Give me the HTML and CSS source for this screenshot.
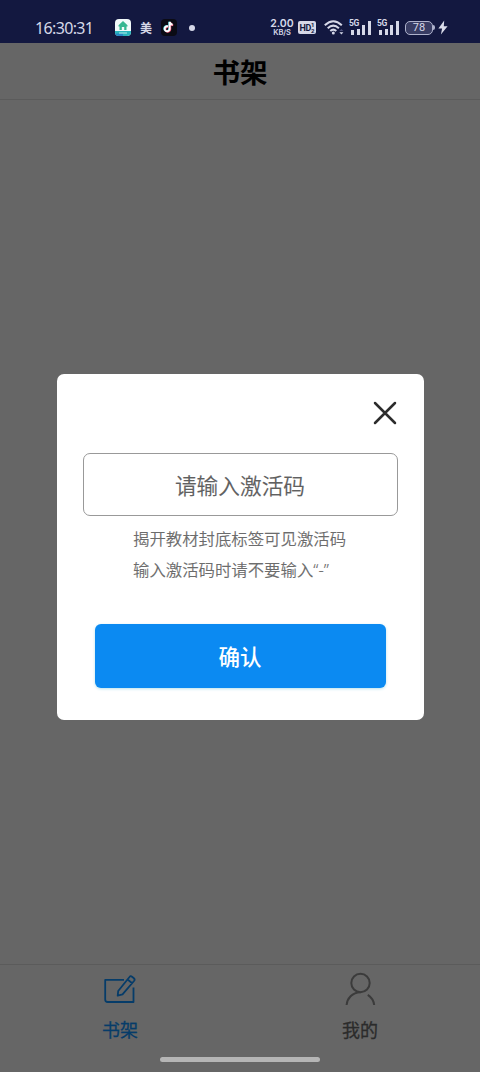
FILE: index.html
```html
<!DOCTYPE html>
<html lang="zh-CN">
<head>
<meta charset="utf-8">
<title>书架</title>
<link rel="stylesheet" href="styles.css">
</head>
<body>
<div class="screen">
  <div class="status">
    <span class="time">16:30:31</span>
    <svg class="app-icon" width="16" height="17" viewBox="0 0 16 17">
      <defs><clipPath id="app"><rect width="16" height="17" rx="4"/></clipPath></defs>
      <g clip-path="url(#app)"><rect width="16" height="17" fill="#f2fafa"/><path d="M0 12h16V17H0z" fill="#28b5bd"/><path d="M0 14.500h8V17H0z" fill="#2586c4"/><path d="M4 14h8" stroke="#b5edea" stroke-width="1"/></g>
      <path d="M8 2 3.500 6.200v1.200h1V11h2.300V8h2.400v3h2.300V7.400h1V6.200z" fill="#35b791"/>
    </svg>
    <span class="mei">美</span>
    <svg class="note-icon" width="16" height="17" viewBox="0 0 16 17">
      <rect width="16" height="17" rx="4" fill="#0b0b14"/>
      <g fill="none" stroke-width="1.900"><path d="M7 7.400a2.500 2.500 0 1 0 1.700 2.400V3c.3 1.700 1.300 2.500 2.900 2.700" stroke="#4bd5df" transform="translate(-.5 -.3)"/><path d="M7 7.400a2.500 2.500 0 1 0 1.700 2.400V3c.3 1.700 1.300 2.500 2.900 2.700" stroke="#e34466" transform="translate(.6 .5)"/><path d="M7 7.400a2.500 2.500 0 1 0 1.700 2.400V3c.3 1.700 1.300 2.500 2.900 2.700" stroke="#fff"/></g>
    </svg>
    <span class="dot"></span>
    <div class="speed"><span class="rate">2.00</span><span class="unit">KB/S</span></div>
    <div class="hd"><span class="hd-text">HD</span><span class="hd-sims"><span>1</span><span>2</span></span></div>
    <svg class="wifi" width="20" height="17" viewBox="0 0 20 17">
      <g fill="none" stroke="#d6d8e8" stroke-width="2"><path d="M.8 6.200Q9.300-1.800 17.800 6.200"/><path d="M3.700 9.200Q9.300 4 14.900 9.200"/><path d="M6.300 12Q9.300 9.300 12.300 12"/></g><circle cx="9.300" cy="13.900" r="1.500" fill="#d6d8e8"/><path d="M15.400 13.300h4l-2 2.200z" fill="#d6d8e8"/><path d="M15.400 12.100h4l-2-2.200z" fill="#4c507c"/>
    </svg>
    <div class="signal"><span class="gen">5G</span><i class="bar b1"></i><i class="bar b2"></i><i class="bar b3"></i><i class="bar b4"></i></div>
    <div class="signal second"><span class="gen">5G</span><i class="bar b1"></i><i class="bar b2"></i><i class="bar b3"></i><i class="bar b4"></i></div>
    <div class="battery"><span>78</span></div>
    <i class="cap"></i>
    <svg class="bolt" width="10" height="15" viewBox="0 0 10 15"><path d="M6.200.5.400 8.500h3.700L2.900 14.500 9.600 6.300H5.800z" fill="#dadcea"/></svg>
  </div>
  <header class="title">书架</header>
  <main class="shelf">
    <section class="dialog">
      <svg class="close" width="24" height="24" viewBox="0 0 24 24"><path d="M2 2 22 22M22 2 2 22" fill="none" stroke="#2c2c2c" stroke-width="2.500" stroke-linecap="round"/></svg>
      <div class="field">请输入激活码</div>
      <p class="hint">揭开教材封底标签可见激活码<br>输入激活码时请不要输入“-”</p>
      <div class="confirm">确认</div>
    </section>
  </main>
  <nav class="tabs">
    <div class="tab active">
      <svg class="tab-icon" width="36" height="36" viewBox="0 0 36 36"><g fill="none" stroke="#063c69" stroke-width="1.800" stroke-linejoin="round"><path d="M22 7.800H3.200V27.500Q3.200 30 5.700 30H31.500V15.500"/><path d="M16.200 19 27.300 5.200Q28.500 3.500 30 4.700L31.900 6.200Q33.300 7.400 32 9L20.500 22.300 15.700 23.700zM25.600 7.500 30.200 11.200"/></g></svg>
      <span>书架</span>
    </div>
    <div class="tab">
      <svg class="tab-icon" width="36" height="36" viewBox="0 0 36 36"><g fill="none" stroke="#3b3b3b" stroke-width="2"><circle cx="18.500" cy="11" r="9.200"/><path d="M4.600 33C5.200 26.500 10 20.500 18.500 20.200M25.800 22.800Q31.500 26.500 32.200 33"/></g></svg>
      <span>我的</span>
    </div>
  </nav>
  <div class="gesture"><i></i></div>
</div>
</body>
</html>
```
FILE: styles.css
```css
* { box-sizing: border-box; }
body { margin: 0; font-family: "Noto Sans", "Noto Sans CJK SC", sans-serif; }
.screen { width: 480px; height: 1072px; background: #666; display: flex; flex-direction: column; overflow: hidden; }
svg { display: block; flex: none; }
.status { height: 43px; flex: none; background: #131840; color: #d6d8e8; display: flex; align-items: center; padding: 12px 0 0 35px; }
.time { width: 80px; font: 16px/20px "Noto Sans", sans-serif; letter-spacing: -.65px; white-space: nowrap; }
.mei { width: 12px; margin-left: 9px; font: bold 12px/16px "Noto Sans CJK SC", sans-serif; }
.note-icon { margin-left: 9px; }
.dot { width: 6px; height: 6px; margin-left: 12px; border-radius: 50%; background: #d6d8e8; }
.speed { width: 24px; margin-left: 75px; display: flex; flex-direction: column; align-items: center; }
.rate { font: 600 10.500px/10px Inter, sans-serif; }
.unit { font: 600 7.500px/8px Inter, sans-serif; letter-spacing: -.1px; }
.hd { width: 18px; height: 13px; margin-left: 4px; border-radius: 2px; background: #d6d8e8; color: #131840; display: flex; align-items: center; justify-content: center; }
.hd-text { font: bold 9px/12px Roboto, sans-serif; letter-spacing: -.4px; }
.hd-sims { display: flex; flex-direction: column; font: bold 6px/6px Roboto, sans-serif; }
.wifi { margin-left: 8px; }
.signal { position: relative; width: 21px; height: 16px; margin-left: 6px; display: flex; align-items: flex-end; gap: 2.600px; padding: 0 0 1px 1px; }
.second { margin-left: 7px; }
.gen { position: absolute; left: -1px; top: -1px; font: bold 8.500px/9px Roboto, sans-serif; letter-spacing: -.4px; }
.bar { width: 3px; background: #d6d8e8; }
.b1 { height: 5px; }
.b2 { height: 6px; }
.b3 { height: 10px; }
.b4 { height: 14px; }
.battery { width: 28px; height: 14px; margin-left: 6px; border: 1.500px solid #aeb2cc; border-radius: 5px; display: flex; align-items: center; justify-content: center; background: #383c63; font: 11px/12px Roboto, sans-serif; }
.battery span { padding-top: 1px; }
.cap { width: 2px; height: 5px; background: #aeb2cc; border-radius: 0 2px 2px 0; }
.bolt { margin-left: 3px; }
.title { height: 57px; flex: none; border-bottom: 1px solid #5b5b5b; text-align: center; font: bold 27.500px/56px "Noto Sans CJK SC", sans-serif; color: #000; }
.shelf { height: 864px; flex: none; padding: 274px 56.500px 0; }
.dialog { height: 346px; border-radius: 7px; background: #fff; padding: 27px 26px 0; display: flex; flex-direction: column; align-items: center; }
.close { align-self: flex-end; margin-right: 1px; }
.field { width: 315px; height: 63px; margin-top: 28px; flex: none; border: 1px solid #999; border-radius: 7px; color: #606060; text-align: center; font: 350 21.700px/62px "Noto Sans CJK SC", sans-serif; -webkit-text-stroke: .15px; }
.hint { width: 214px; margin: 7px 0 0; color: #6c6c6c; font: 350 16.400px/31px "Noto Sans", "Noto Sans CJK SC", sans-serif; white-space: nowrap; -webkit-text-stroke: .1px; }
.confirm { width: 291px; height: 64px; margin-top: 39px; border-radius: 6px; background: #0b8af2; box-shadow: 0 1px 3px #b8e2ed; color: #fff; text-align: center; font: 500 21.500px/64px "Noto Sans CJK SC", sans-serif; }
.tabs { height: 81px; flex: none; border-top: 1px solid #5b5b5b; display: flex; }
.tab { width: 240px; display: flex; flex-direction: column; align-items: center; padding-top: 7px; color: #2b2b2b; font: 400 18px/26px "Noto Sans CJK SC", sans-serif; -webkit-text-stroke: .3px; }
.tab span { margin-top: 8px; }
.active { color: #063c69; }
.gesture { flex: 1; display: flex; justify-content: center; align-items: flex-start; padding-top: 12px; }
.gesture i { width: 160px; height: 5px; border-radius: 3px; background: #b5b5b5; }
```
